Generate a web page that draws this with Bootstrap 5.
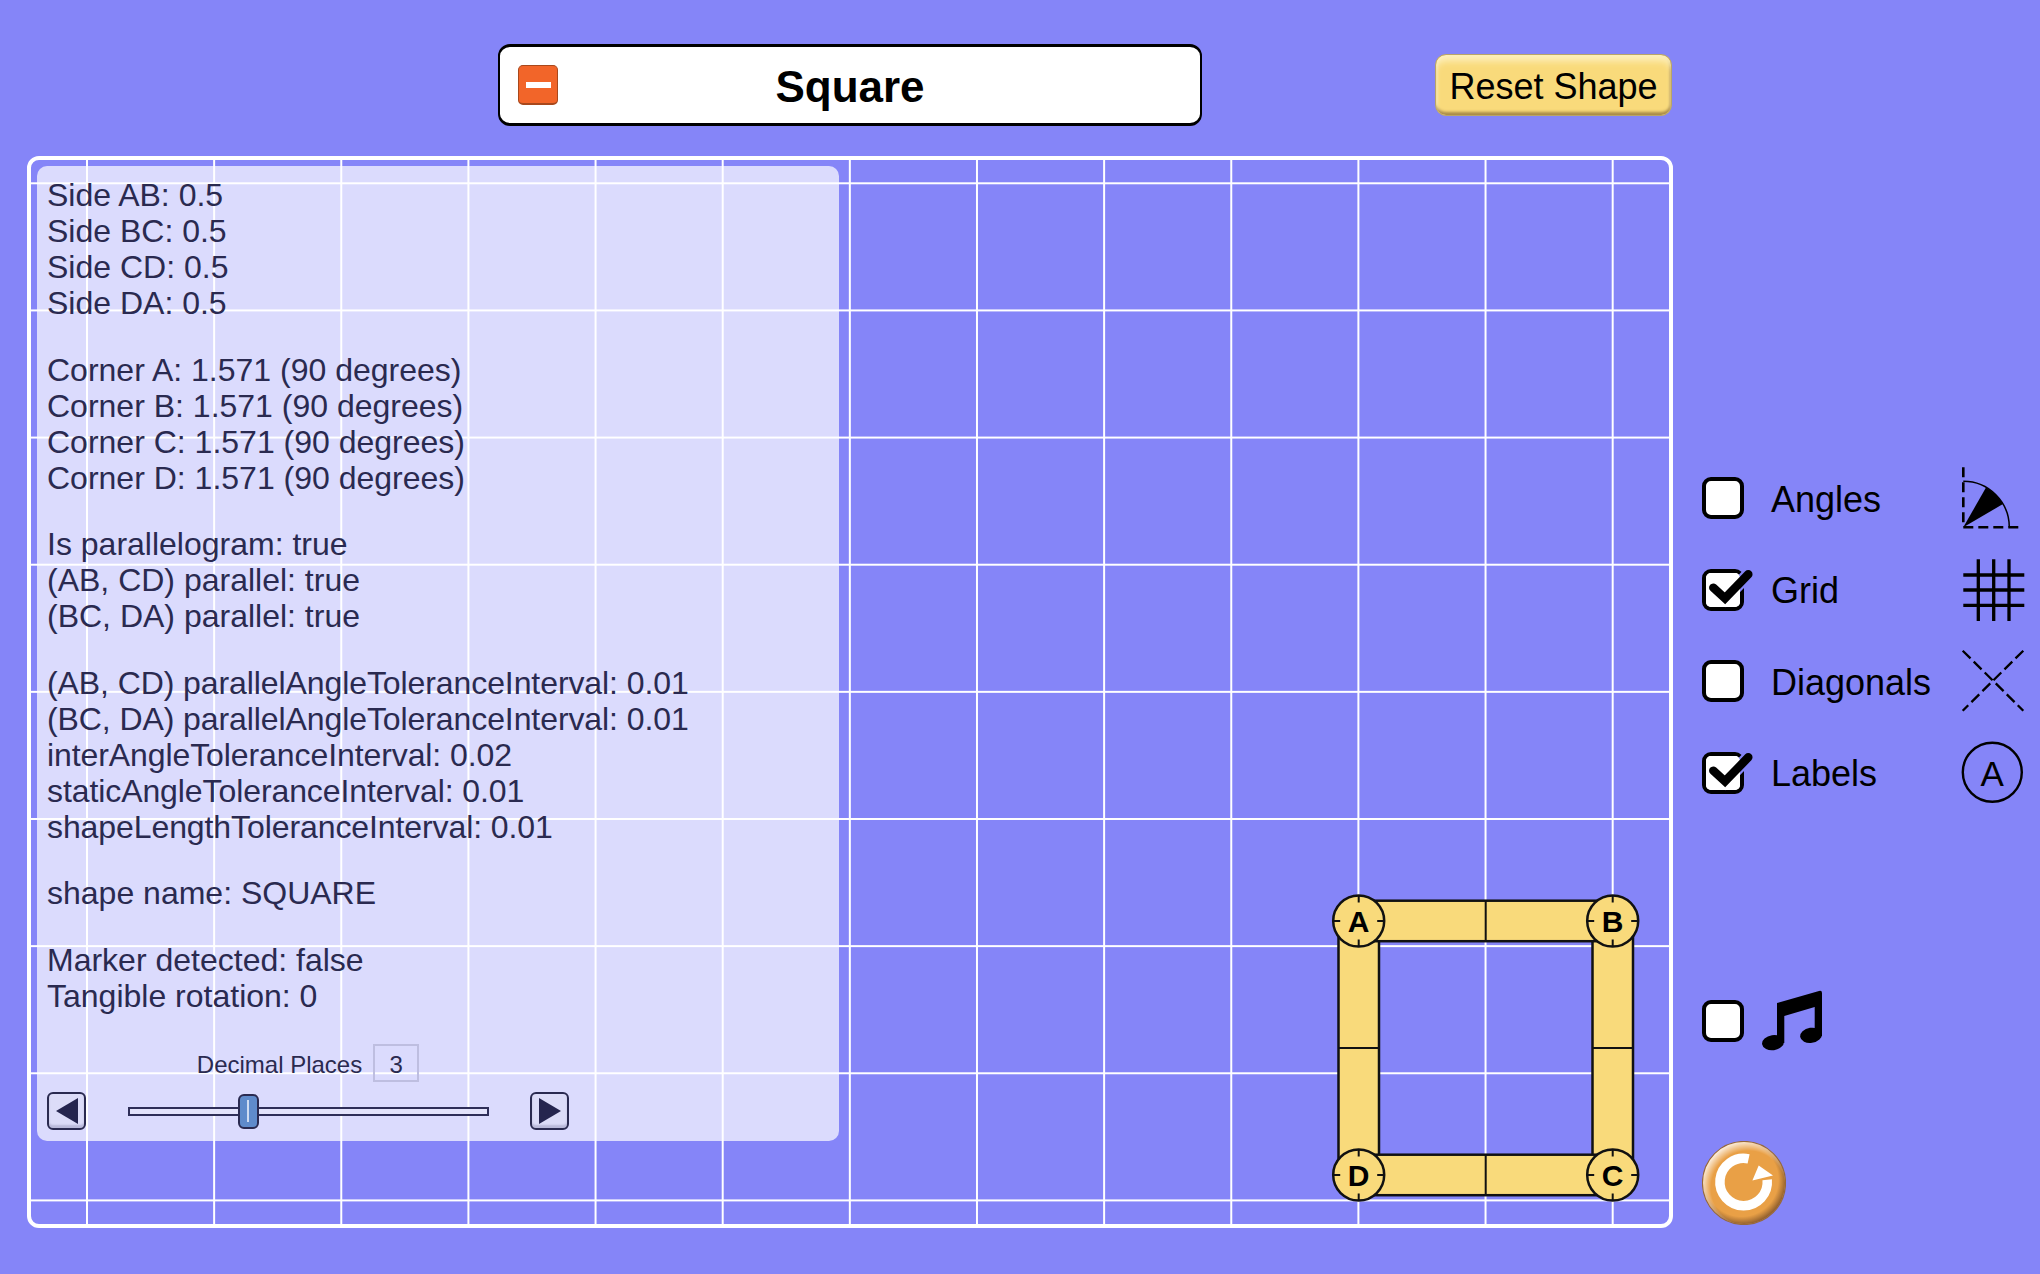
<!DOCTYPE html>
<html lang="en">
<head>
    <meta charset="UTF-8">
    <meta name="viewport" content="width=device-width, initial-scale=1.0">
    <title>Square</title>
    <link href="https://cdn.jsdelivr.net/npm/bootstrap@5.3.0/dist/css/bootstrap.min.css" rel="stylesheet">
    <style>
        body {
            background-color: #8585f8;
            font-family: "Liberation Sans", Arial, sans-serif;
            color: #000;
        }
        .app-page {
            width: 2040px;
            height: 1274px;
            padding: 44px 0 0 27px;
            overflow: hidden;
        }
        .title-box {
            width: 704px;
            height: 82px;
            margin-left: 471px;
            padding: 0 18px;
            background: #fff;
            border: 2px solid #000;
            border-top-width: 3px;
            border-bottom-width: 3px;
            border-radius: 12px;
            grid-template-columns: 1fr auto 1fr;
        }
        .title-text {
            padding-top: 3px;
            font-size: 44px;
            line-height: 1;
        }
        .minus-btn {
            width: 40px;
            height: 40px;
            background: #f26529;
            border: 1px solid #a8481c;
            border-bottom-width: 2px;
            border-radius: 5px;
        }
        .minus-btn span {
            width: 25px;
            height: 6px;
            background: #fff;
        }
        .reset-btn {
            width: 237px;
            height: 62px;
            margin-left: 233px;
            padding: 3px 0 0;
            font-size: 36px;
            line-height: 1;
            color: #000;
            background: #f9da7b;
            border: 1px solid #b9a468;
            border-radius: 11px;
            box-shadow: inset 0 8px 7px -2px #fdf0bd, inset 0 -4px 3px -1px #a98b48, inset -2px 0 2px #cdb064, inset 2px 0 2px #fbe6a4;
        }
        .board {
            width: 1646px;
            height: 1072px;
            margin-top: 30px;
            border: 4px solid #fff;
            border-radius: 12px;
            background-image:
                linear-gradient(to right, #fff 2px, transparent 2px),
                linear-gradient(to bottom, #fff 2px, transparent 2px);
            background-size: 127.15px 100%, 100% 127.15px;
            background-position: 55px 0, 0 22.3px;
            background-origin: padding-box;
        }
        .stats-panel {
            left: 6px;
            top: 6px;
            width: 802px;
            height: 975px;
            padding: 11px 10px 11px;
            background: rgba(255, 255, 255, .7);
            border-radius: 10px;
            font-size: 32px;
            line-height: 36px;
            color: #2a2a50;
        }
        .stat-group {
            margin-bottom: 30.5px;
        }
        .tolerance-group {
            letter-spacing: -.09px;
        }
        .slider-box {
            width: 522px;
        }
        .decimal-label {
            gap: 11px;
            height: 38px;
            font-size: 24px;
            line-height: 1;
        }
        .decimal-label span:first-child {
            padding-top: 3px;
        }
        .decimal-value {
            width: 46px;
            height: 38px;
            padding-top: 3px;
            border: 2px solid #bebee0;
        }
        .slider-row {
            margin-top: 10px;
        }
        .arrow-btn {
            width: 39px;
            height: 38px;
            background: #dcdcf8;
            border: 2px solid #2a2a50;
            border-radius: 6px;
            box-shadow: inset 0 -3px 2px #b9b9da;
            flex: none;
        }
        .slider-track {
            width: 361px;
            height: 9px;
            margin: 0 auto;
            background: #e3e3fb;
            border: 2.5px solid #2e2e58;
        }
        .slider-thumb {
            left: 108px;
            top: -15px;
            width: 21px;
            height: 35px;
            background: #5f8bcb;
            border: 2.5px solid #2a2a50;
            border-radius: 6px;
        }
        .slider-thumb span {
            width: 2px;
            height: 22px;
            background: #cfdcf2;
        }
        .shape-svg {
            left: 1294px;
            top: 730px;
        }
        .shape-svg text {
            font-family: "Liberation Sans", Arial, sans-serif;
            font-weight: 700;
            font-size: 30px;
            text-anchor: middle;
        }
        .side-col {
            width: 324px;
            margin-left: 29px;
            padding-top: 351px;
        }
        .option-row {
            height: 42px;
            margin-bottom: 49.5px;
            font-size: 36px;
            line-height: 1;
        }
        .option-row svg {
            overflow: visible;
            flex: none;
        }
        .option-label {
            margin-left: 27px;
            padding-top: 3px;
        }
        .music-row {
            margin-top: 206px;
            height: 42px;
            gap: 18px;
        }
        .music-row svg {
            overflow: visible;
            flex: none;
        }
        .reload-btn {
            display: block;
            margin-top: 99px;
        }
    </style>
</head>
<body>
    <svg width="0" height="0" class="position-absolute">
        <defs>
            <g id="box-off">
                <rect x="2" y="2" width="38" height="38" rx="7" fill="#fff" stroke="#000" stroke-width="4"/>
            </g>
            <g id="box-on">
                <rect x="2" y="2" width="38" height="38" rx="7" fill="#fff" stroke="#000" stroke-width="4"/>
                <polyline points="11.3,18.7 23,29.3 46.3,5.3" fill="none" stroke="#8585f8" stroke-width="13"/>
                <rect x="4" y="4" width="34" height="34" rx="5" fill="#fff"/>
                <polyline points="11.3,18.7 23,29.3 46.3,5.3" fill="none" stroke="#000" stroke-width="8.5" stroke-linecap="round"/>
            </g>
            <g id="node">
                <circle r="25.5" fill="#f9da7b" stroke="#111" stroke-width="2.5"/>
                <path d="M0 -25V-18.5M0 25V18.5M-25 0H-18.5M25 0H18.5" stroke="#111" stroke-width="2"/>
            </g>
            <radialGradient id="gloss-dark" cx=".47" cy=".46" r=".56">
                <stop offset=".8" stop-color="#8a5a2c" stop-opacity="0"/>
                <stop offset="1" stop-color="#7a4f28" stop-opacity=".95"/>
            </radialGradient>
            <radialGradient id="gloss-light" cx=".55" cy=".56" r=".58">
                <stop offset=".78" stop-color="#fff" stop-opacity="0"/>
                <stop offset="1" stop-color="#fff" stop-opacity=".85"/>
            </radialGradient>
        </defs>
    </svg>

    <div class="app-page">
        <div class="d-flex align-items-center">
            <div class="title-box d-grid align-items-center">
                <div class="minus-btn d-flex align-items-center justify-content-center"><span></span></div>
                <div class="title-text fw-bold text-center">Square</div>
            </div>
            <button class="reset-btn btn" type="button">Reset Shape</button>
        </div>

        <div class="d-flex align-items-start">
            <div class="board position-relative flex-shrink-0">
                <div class="stats-panel position-absolute d-flex flex-column">
                    <p class="stat-group">Side AB: 0.5<br>Side BC: 0.5<br>Side CD: 0.5<br>Side DA: 0.5</p>
                    <p class="stat-group">Corner A: 1.571 (90 degrees)<br>Corner B: 1.571 (90 degrees)<br>Corner C: 1.571 (90 degrees)<br>Corner D: 1.571 (90 degrees)</p>
                    <p class="stat-group">Is parallelogram: true<br>(AB, CD) parallel: true<br>(BC, DA) parallel: true</p>
                    <p class="stat-group tolerance-group">(AB, CD) parallelAngleToleranceInterval: 0.01<br>(BC, DA) parallelAngleToleranceInterval: 0.01<br>interAngleToleranceInterval: 0.02<br>staticAngleToleranceInterval: 0.01<br>shapeLengthToleranceInterval: 0.01</p>
                    <p class="stat-group">shape name: SQUARE</p>
                    <p class="mb-0">Marker detected: false<br>Tangible rotation: 0</p>

                    <div class="slider-box mt-auto">
                        <div class="decimal-label d-flex align-items-center justify-content-center">
                            <span>Decimal Places</span>
                            <span class="decimal-value d-flex align-items-center justify-content-center">3</span>
                        </div>
                        <div class="slider-row d-flex align-items-center">
                            <div class="arrow-btn d-flex align-items-center justify-content-center">
                                <svg width="22" height="26" viewBox="0 0 22 26"><path d="M0 13L22 0V26Z" fill="#25254e"/></svg>
                            </div>
                            <div class="slider-track position-relative">
                                <div class="slider-thumb position-absolute d-flex align-items-center justify-content-center"><span></span></div>
                            </div>
                            <div class="arrow-btn d-flex align-items-center justify-content-center">
                                <svg width="22" height="26" viewBox="0 0 22 26"><path d="M22 13L0 0V26Z" fill="#25254e"/></svg>
                            </div>
                        </div>
                    </div>
                </div>

                <!-- shape drawn in page coordinates -->
                <svg class="shape-svg position-absolute" width="320" height="320" viewBox="1325 890 320 320">
                    <g fill="#f9da7b" stroke="#111" stroke-width="2.5">
                        <rect x="1338.5" y="921" width="40.5" height="254"/>
                        <rect x="1592.5" y="921" width="40.5" height="254"/>
                        <rect x="1358.7" y="900.7" width="254" height="40.5"/>
                        <rect x="1358.7" y="1154.7" width="254" height="40.5"/>
                    </g>
                    <path d="M1485.7 900.7V941.2M1485.7 1154.7V1195.2M1338.5 1048H1379M1592.5 1048H1633" stroke="#111" stroke-width="2"/>
                    <use href="#node" x="1358.7" y="921"/>
                    <use href="#node" x="1612.7" y="921"/>
                    <use href="#node" x="1612.7" y="1175"/>
                    <use href="#node" x="1358.7" y="1175"/>
                    <text x="1358.7" y="932">A</text>
                    <text x="1612.7" y="932">B</text>
                    <text x="1612.7" y="1186">C</text>
                    <text x="1358.7" y="1186">D</text>
                </svg>
            </div>

            <div class="side-col flex-shrink-0">
                <div class="option-row d-flex align-items-center">
                    <svg width="42" height="42"><use href="#box-off"/></svg>
                    <span class="option-label">Angles</span>
                    <svg class="ms-auto" width="66" height="66" viewBox="0 0 66 66">
                        <path d="M3.3 2.3V62.3H62.7" fill="none" stroke="#000" stroke-width="2.6" stroke-dasharray="10 5"/>
                        <path d="M3.3 16.3A46 46 0 0 1 49.3 62.3" fill="none" stroke="#000" stroke-width="1.5"/>
                        <path d="M3.3 62.3L26 22.5A46 46 0 0 1 43 39Z" fill="#000"/>
                    </svg>
                </div>
                <div class="option-row d-flex align-items-center">
                    <svg width="42" height="42"><use href="#box-on"/></svg>
                    <span class="option-label">Grid</span>
                    <svg class="ms-auto" width="66" height="66" viewBox="0 0 66 66">
                        <path d="M18.3 2.3V64M33.7 2.3V64M49 2.3V64M3.3 18H64.3M3.3 33H64.3M3.3 48.3H64.3" fill="none" stroke="#000" stroke-width="3.3"/>
                    </svg>
                </div>
                <div class="option-row d-flex align-items-center">
                    <svg width="42" height="42"><use href="#box-off"/></svg>
                    <span class="option-label">Diagonals</span>
                    <svg class="ms-auto" width="66" height="66" viewBox="0 0 66 66">
                        <path d="M2.7 2.7L63.3 62.7M63.3 2.7L2.7 62.7" fill="none" stroke="#000" stroke-width="2.3" stroke-dasharray="11 4.5"/>
                    </svg>
                </div>
                <div class="option-row d-flex align-items-center">
                    <svg width="42" height="42"><use href="#box-on"/></svg>
                    <span class="option-label">Labels</span>
                    <svg class="ms-auto" width="66" height="66" viewBox="0 0 66 66">
                        <circle cx="32.3" cy="32.3" r="29.5" fill="none" stroke="#000" stroke-width="2.4"/>
                        <text x="32.3" y="45.7" text-anchor="middle" font-family="Liberation Sans" font-size="35">A</text>
                    </svg>
                </div>

                <div class="music-row d-flex align-items-center">
                    <svg width="42" height="42"><use href="#box-off"/></svg>
                    <svg width="60" height="61" viewBox="0 0 60 61">
                        <path d="M15 13L57 .9Q60 0 60 3V46H52.7V17L22.3 26V53H15Z" fill="#000"/>
                        <ellipse cx="11" cy="52.7" rx="11" ry="7.5" transform="rotate(-8 11 52.7)" fill="#000"/>
                        <ellipse cx="49" cy="45.3" rx="11" ry="7.5" transform="rotate(-8 49 45.3)" fill="#000"/>
                    </svg>
                </div>

                <svg class="reload-btn" width="84" height="84" viewBox="8.3 8.3 84 84">
                    <circle cx="50.3" cy="50.3" r="41.5" fill="#e9a046" stroke="#96683c" stroke-width="1.2"/>
                    <circle cx="50.3" cy="50.3" r="41" fill="url(#gloss-dark)"/>
                    <circle cx="50.3" cy="50.3" r="41" fill="url(#gloss-light)"/>
                    <path d="M54.9 26.1A23.7 23.7 0 1 0 73.5 47" fill="none" stroke="#fff" stroke-width="9.5"/>
                    <path d="M65 32.7L79.3 42.7L58.7 47.7Z" fill="#fff"/>
                </svg>
            </div>
        </div>
    </div>
</body>
</html>
